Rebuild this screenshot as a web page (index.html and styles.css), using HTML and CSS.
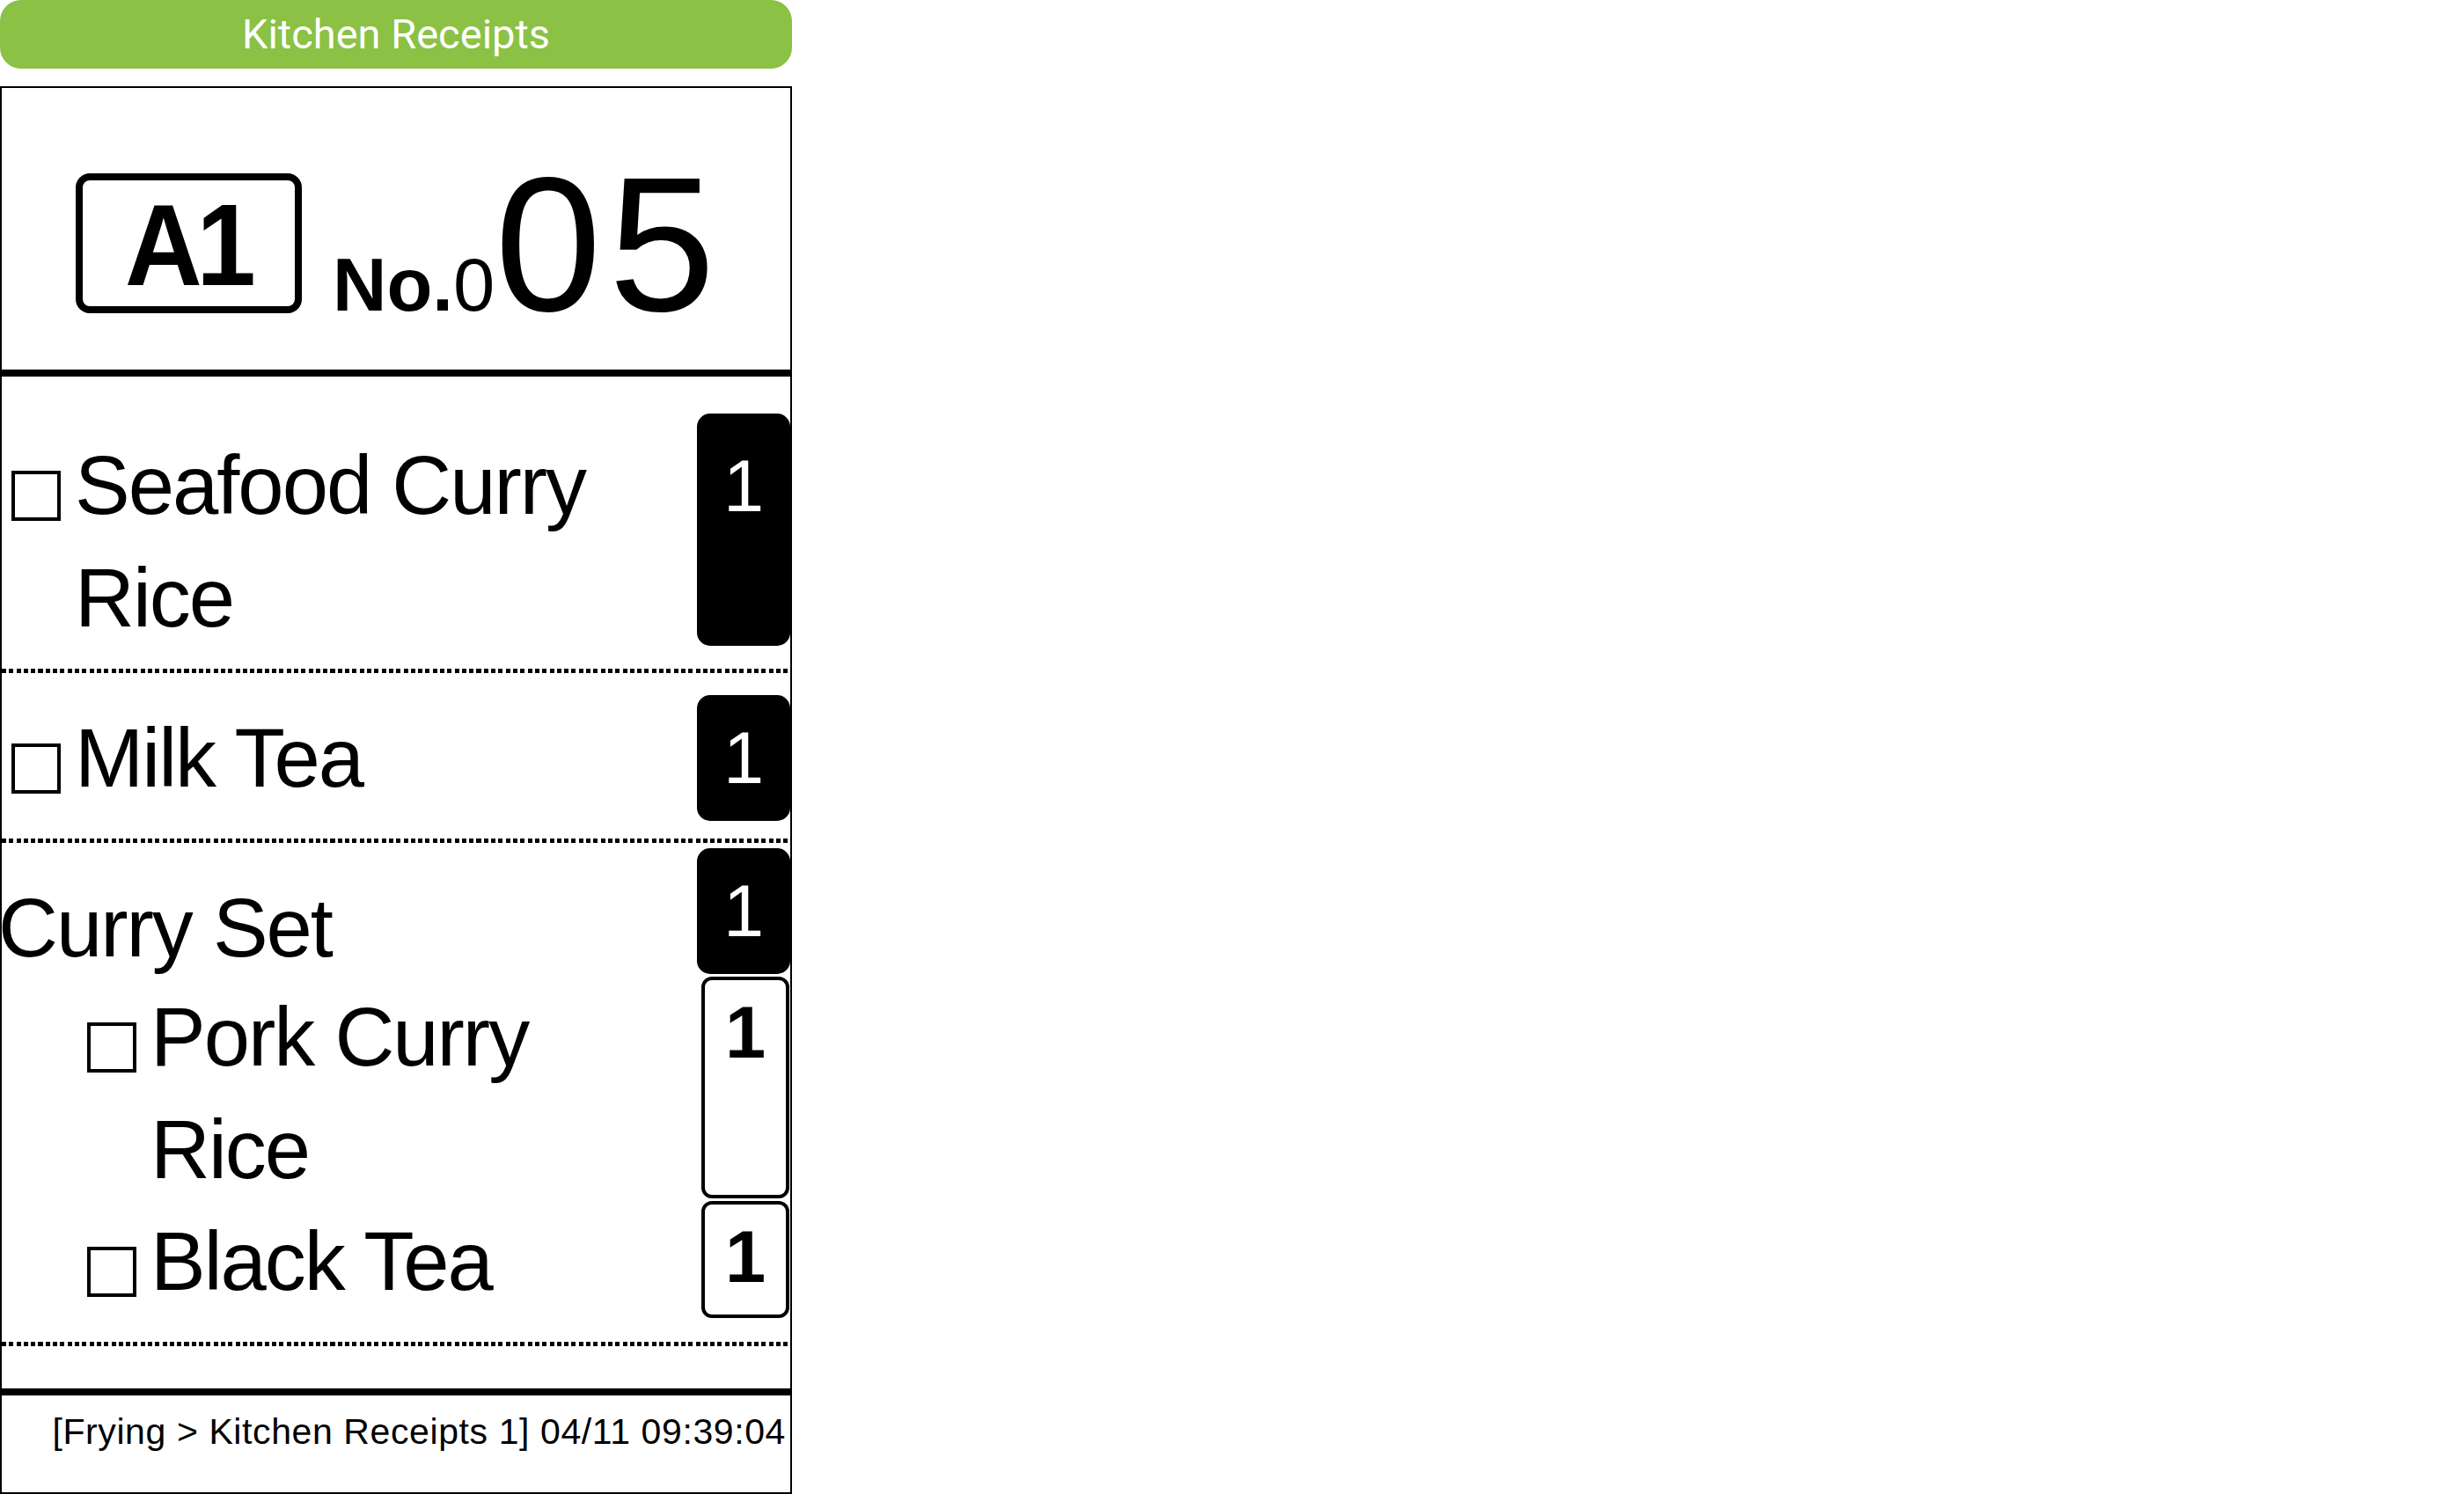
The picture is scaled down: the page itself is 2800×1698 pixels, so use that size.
FILE: index.html
```html
<!DOCTYPE html>
<html lang="en">
<head>
<meta charset="utf-8">
<title>Kitchen Receipts</title>
<link rel="stylesheet" href="styles.css">
</head>
<body>
<div class="receipt">
  <div class="title-bar">Kitchen Receipts</div>
  <div class="ticket">
    <header class="ticket-head">
      <div class="table-tag"><span class="tag-text">A1</span></div>
      <div class="order-no"><span class="no-label">No.</span><span class="no-lead">0</span>05</div>
    </header>
    <section class="items">
      <div class="item item-first">
        <div class="name name-wrap"><span class="check"></span><span class="label">Seafood Curry Rice</span></div>
        <div class="qty qty-double">1</div>
      </div>
      <div class="item">
        <div class="name"><span class="check"></span><span class="label">Milk Tea</span></div>
        <div class="qty">1</div>
      </div>
      <div class="item set">
        <div class="set-head">
          <div class="set-name">Curry Set</div>
          <div class="qty">1</div>
        </div>
        <div class="sub">
          <div class="name name-wrap"><span class="check"></span><span class="label">Pork Curry Rice</span></div>
          <div class="sub-qty sub-qty-double">1</div>
        </div>
        <div class="sub">
          <div class="name"><span class="check"></span><span class="label">Black Tea</span></div>
          <div class="sub-qty">1</div>
        </div>
      </div>
    </section>
    <footer class="ticket-foot">[Frying &gt; Kitchen Receipts 1] 04/11 09:39:04</footer>
  </div>
</div>
</body>
</html>
```
FILE: styles.css
```css
* { box-sizing: border-box; }

html, body {
  margin: 0;
  padding: 0;
  background: #ffffff;
}

body {
  font-family: "Liberation Sans", Arial, sans-serif;
  color: #000000;
}

.receipt {
  width: 900px;
}

.title-bar {
  height: 78px;
  line-height: 78px;
  margin-bottom: 20px;
  background: #8bc145;
  border-radius: 24px;
  color: #ffffff;
  font-family: Roboto, "Liberation Sans", sans-serif;
  font-size: 47px;
  text-align: center;
}

.ticket {
  border: 2px solid #000000;
}

/* ---------- header ---------- */
.ticket-head {
  display: flex;
  align-items: flex-end;
  padding: 97px 0 64px 84px;
  border-bottom: 8px solid #000000;
}

.table-tag {
  flex: none;
  width: 257px;
  height: 159px;
  padding: 4px 0 0 48px;
  border: 8px solid #000000;
  border-radius: 16px;
  font-size: 132px;
  font-weight: 700;
  line-height: 139px;
  white-space: nowrap;
}

.tag-text {
  display: inline-block;
  letter-spacing: -7px;
  transform: scaleX(0.92);
  transform-origin: left center;
}

.order-no {
  flex: none;
  margin-left: 35px;
  font-size: 218px;
  line-height: 157px;
  letter-spacing: 8px;
  white-space: nowrap;
}

.no-label {
  font-size: 85px;
  font-weight: 700;
  line-height: 0;
  letter-spacing: 0;
}

.no-lead {
  font-size: 85px;
  line-height: 0;
  letter-spacing: 0;
}

/* ---------- items ---------- */
.items {
  padding: 17px 0 48px;
}

.item {
  display: flex;
  align-items: flex-start;
  padding: 25px 0 20px;
  border-bottom: 5px solid transparent;
  border-image-source: repeating-linear-gradient(to right, #000000 0 5px, transparent 5px 8.3px);
  border-image-slice: 0 0 5 0;
  border-image-width: 0 0 5px 0;
  border-image-repeat: stretch;
}

.name {
  flex: 1;
  display: flex;
  align-items: flex-start;
  margin-top: 7.5px;
  padding: 0 24px 0 11px;
}

.name-wrap {
  margin-top: 18px;
  margin-bottom: -4px;
}

.check {
  flex: none;
  width: 56px;
  height: 57px;
  margin: 47px 16px 0 0;
  border: 4px solid #000000;
}

.label,
.set-name {
  font-size: 94px;
  line-height: 128px;
  letter-spacing: -2px;
}

.qty {
  flex: none;
  width: 106px;
  height: 143px;
  padding-top: 30px;
  background: #000000;
  border-radius: 15px;
  color: #ffffff;
  font-size: 83px;
  line-height: 83px;
  text-align: center;
}

.qty-double {
  height: 264px;
  padding-top: 41px;
}

/* ---------- set ---------- */
.item.set {
  display: block;
  padding: 6px 0 27px;
}

.set-head {
  display: flex;
  align-items: flex-start;
}

.set-name {
  flex: 1;
  margin: 26.5px 0 -8.5px -4px;
}

.sub {
  display: flex;
  align-items: flex-start;
  padding-left: 86px;
}

.sub + .sub {
  margin-top: 3px;
}

.sub .name {
  margin-top: 5px;
}

.sub .name-wrap {
  margin-bottom: -9px;
}

.sub-qty {
  flex: none;
  width: 100px;
  height: 133px;
  margin-right: 1px;
  padding-top: 18px;
  border: 4px solid #000000;
  border-radius: 12px;
  font-size: 83px;
  font-weight: 700;
  line-height: 83px;
  text-align: center;
}

.sub-qty-double {
  height: 252px;
}

/* ---------- footer ---------- */
.ticket-foot {
  padding: 18px 5px 46px 0;
  border-top: 8px solid #000000;
  font-size: 41px;
  line-height: 46px;
  letter-spacing: 0.6px;
  text-align: right;
  white-space: nowrap;
}
```
